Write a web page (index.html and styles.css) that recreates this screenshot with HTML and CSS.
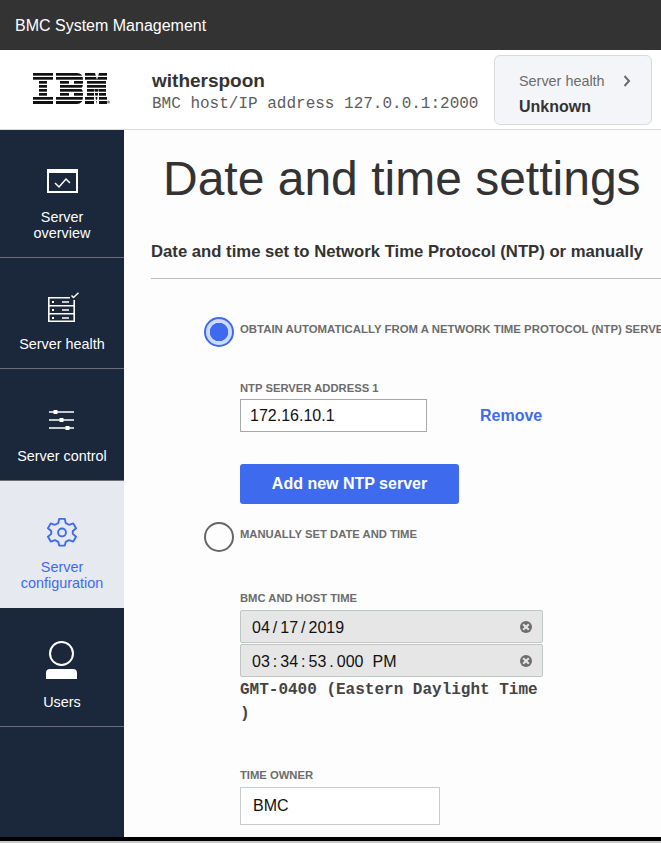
FILE: index.html
```html
<!DOCTYPE html>
<html lang="en">
<head>
<meta charset="utf-8">
<title>BMC System Management</title>
<link rel="stylesheet" href="styles.css">
</head>
<body>
<div class="app">
  <header class="topbar">BMC System Management</header>
  <section class="sysbar">
    <div class="logo">
      <svg width="77" height="31" viewBox="0 0 77 31">
        <g fill="#111">
          <path d="M0 0H20V8H14V23H20V31H0V23H6V8H0Z"/>
          <path fill-rule="evenodd" d="M23 0H44Q50 0 50 7V11Q50 14 48 15.500Q50 17 50 20V24Q50 31 44 31H23V23H27V8H23ZM36 8V12H41V8ZM36 19V23H41V19Z"/>
          <path d="M52 0H62L64 7L66 0H74V8H73V23H74V31H66V14L63.500 31L61 14V31H52V23H54V8H52Z"/>
        </g>
        <g fill="#fff">
          <rect x="0" y="2.700" width="77" height="1.300"/>
          <rect x="0" y="6.700" width="77" height="1.300"/>
          <rect x="0" y="10.700" width="77" height="1.300"/>
          <rect x="0" y="14.700" width="77" height="1.300"/>
          <rect x="0" y="18.700" width="77" height="1.300"/>
          <rect x="0" y="22.700" width="77" height="1.300"/>
          <rect x="0" y="26.700" width="77" height="1.300"/>
        </g>
        <circle cx="75.500" cy="29" r="1.500" fill="#888"/>
      </svg>
    </div>
    <div class="sysinfo">
      <div class="sysname">witherspoon</div>
      <div class="sysaddr">BMC host/IP address 127.0.0.1:2000</div>
    </div>
    <a class="healthcard">
      <span class="healthtop">Server health
        <svg class="chev" width="8" height="12" viewBox="0 0 8 12"><path d="M1.500 1L6 6L1.500 11" fill="none" stroke="#6b6b6b" stroke-width="2"/></svg>
      </span>
      <strong class="healthval">Unknown</strong>
    </a>
  </section>
  <div class="body">
    <nav class="side">
      <a class="navitem ni-overview">
        <svg width="31" height="24" viewBox="0 0 31 24"><rect x="1" y="1" width="29" height="22" fill="none" stroke="#fff" stroke-width="2"/><path d="M0 3H31" stroke="#fff" stroke-width="2"/><path d="M8 14L12 18L19 10L23 14" fill="none" stroke="#fff" stroke-width="1.500"/></svg>
        <span>Server<br>overview</span>
      </a>
      <a class="navitem ni-health">
        <svg width="34" height="30" viewBox="0 0 34 30"><path d="M25 5.800H3.800V29.200H29.200V8M3.800 13.800H29.200M3.800 21.800H29.200" fill="none" stroke="#fff" stroke-width="1.600"/><path d="M17 10H24M17 18H24M17 26H24" stroke="#fff" stroke-width="1.600"/><g fill="#fff"><rect x="7" y="9" width="2" height="2"/><rect x="7" y="17" width="2" height="2"/><rect x="7" y="25" width="2" height="2"/></g><path d="M26.500 3.500L28.500 5.500L33.500 0.800" fill="none" stroke="#fff" stroke-width="1.500"/></svg>
        <span>Server health</span>
      </a>
      <a class="navitem ni-control">
        <svg width="26" height="22" viewBox="0 0 26 22"><path d="M0 3H25M0 11H25M0 19H25" stroke="#fff" stroke-width="1.400"/><rect x="4.500" y="1" width="4" height="4" fill="#fff"/><rect x="10.500" y="9" width="4" height="4" fill="#fff"/><rect x="16.500" y="17" width="4" height="4" fill="#fff"/></svg>
        <span>Server control</span>
      </a>
      <a class="navitem ni-config active">
        <svg width="30" height="30" viewBox="0 0 32 32"><path d="M13 2H19L20 6.500L23.500 8.300L28 6.800L31 12L27.500 15V18L31 21L28 26.200L23.500 24.700L20 26.500L19 30.500H13L12 26.500L8.500 24.700L4 26.200L1 21L4.500 18V15L1 12L4 6.800L8.500 8.300L12 6.500Z" fill="none" stroke="#3e6bee" stroke-width="2" stroke-linejoin="round"/><circle cx="16" cy="16.500" r="4.200" fill="none" stroke="#3e6bee" stroke-width="2"/></svg>
        <span>Server<br>configuration</span>
      </a>
      <a class="navitem ni-users">
        <svg width="32" height="40" viewBox="0 0 32 40"><circle cx="15.500" cy="13.500" r="11.500" fill="none" stroke="#fff" stroke-width="2"/><path d="M0 39V33Q0 29 4 29H27Q31 29 31 33V39Z" fill="#fff"/></svg>
        <span>Users</span>
      </a>
    </nav>
    <main class="content">
      <h1 class="title">Date and time settings</h1>
      <h2 class="subtitle">Date and time set to Network Time Protocol (NTP) or manually</h2>
      <div class="rule"></div>
      <div class="radiorow rr-ntp">
        <span class="radio on"></span>
        <span class="caps">OBTAIN AUTOMATICALLY FROM A NETWORK TIME PROTOCOL (NTP) SERVER</span>
      </div>
      <div class="field f-ntp">
        <label class="caps">NTP SERVER ADDRESS 1</label>
        <div class="ntprow">
          <div class="input ntpinput">172.16.10.1</div>
          <a class="remove">Remove</a>
        </div>
      </div>
      <button class="addbtn">Add new NTP server</button>
      <div class="radiorow rr-man">
        <span class="radio"></span>
        <span class="caps">MANUALLY SET DATE AND TIME</span>
      </div>
      <div class="field f-time">
        <label class="caps">BMC AND HOST TIME</label>
        <div class="dtinput"><span class="dtval">04<i>/</i>17<i>/</i>2019</span><span class="clear"></span></div>
        <div class="dtinput"><span class="dtval">03<i>:</i>34<i>:</i>53<i>.</i>000<b class="ampm">PM</b></span><span class="clear"></span></div>
        <div class="tz">GMT-0400 (Eastern Daylight Time<br>)</div>
      </div>
      <div class="field f-owner">
        <label class="caps">TIME OWNER</label>
        <div class="input ownerinput">BMC</div>
      </div>
    </main>
  </div>
  <div class="bottom"></div>
</div>
</body>
</html>
```
FILE: styles.css
```css
* { box-sizing: border-box; }
html, body { margin: 0; padding: 0; height: 100%; overflow: hidden; }
body { font-family: "Liberation Sans", Arial, sans-serif; color: #333; background: #fff; }
.app { width: 661px; height: 843px; display: flex; flex-direction: column; overflow: hidden; }

.topbar { height: 50px; flex: none; background: #333; color: #fff; font-size: 16px; line-height: 48px; padding: 2px 0 0 15px; }

.sysbar { height: 80px; flex: none; display: flex; background: #fff; border-bottom: 1px solid #d8dade; }
.logo { width: 152px; flex: none; padding: 23px 0 0 33px; }
.logo svg { display: block; }
.sysinfo { width: 342px; flex: none; }
.sysname { font-size: 19px; font-weight: 700; line-height: 21px; margin-top: 20px; color: #333; }
.sysaddr { font-family: "Liberation Mono", "Courier New", monospace; font-size: 16px; line-height: 16px; margin-top: 5px; color: #5d5d5d; white-space: nowrap; }
.healthcard { width: 158px; height: 70px; flex: none; margin-top: 5px; background: #f4f5f9; border: 1px solid #d8dade; border-radius: 6px; padding: 16px 0 0 24px; display: flex; flex-direction: column; }
.healthtop { font-size: 14.400px; line-height: 18px; color: #6b6b6b; display: flex; align-items: center; gap: 18px; }
.healthval { font-size: 16px; line-height: 18px; color: #333; margin-top: 8px; }

.body { flex: 1; min-height: 0; display: flex; }
.side { width: 124px; flex: none; background: #1b273a; display: flex; flex-direction: column; }
.navitem { display: flex; flex-direction: column; align-items: center; color: #fff; font-size: 14.400px; line-height: 16px; text-align: center; border-bottom: 1px solid #6a6e75; }
.navitem svg { display: block; flex: none; }
.ni-overview { height: 128px; padding-top: 39px; }
.ni-overview span { margin-top: 16px; }
.ni-health { height: 111px; padding-top: 34px; }
.ni-health span { margin-top: 14px; }
.ni-control { height: 112px; padding-top: 40px; }
.ni-control span { margin-top: 17px; }
.ni-config { height: 127px; padding-top: 36px; background: #e6e9ef; color: #3e6bee; border-bottom: 1px solid #e6e9ef; }
.ni-config span { margin-top: 12px; }
.ni-users { height: 119px; padding-top: 32px; }
.ni-users span { margin-top: 14px; }

.content { flex: 1; min-width: 0; background: #fdfdfd; padding-left: 27px; overflow: hidden; }
.title { font-size: 48px; font-weight: 400; line-height: 56px; margin: 21px 0 0 12px; color: #333; white-space: nowrap; }
.subtitle { font-size: 16.700px; font-weight: 700; line-height: 20px; margin: 35px 0 0; color: #333; white-space: nowrap; }
.rule { height: 1px; background: #b9bdc0; margin-top: 16px; }

.caps { font-size: 11.250px; font-weight: 700; color: #6c6c6c; line-height: 14px; white-space: nowrap; }
.radiorow { display: flex; align-items: flex-start; margin-left: 53px; gap: 6px; }
.rr-ntp { margin-top: 38px; }
.rr-man { margin-top: 18px; }
.rr-ntp .caps { padding-top: 5px; font-size: 11.400px; }
.rr-man .caps { padding-top: 5px; }
.radio { width: 30px; height: 30px; flex: none; border-radius: 50%; border: 2px solid #666; background: #fdfdfd; }
.radio.on { border-color: #3e6bee; background: radial-gradient(circle, #3e6bee 0 9px, #cfdafb 9.500px); }

.field { margin-left: 89px; }
.field label { display: block; }
.f-ntp { margin-top: 34px; }
.ntprow { display: flex; align-items: center; margin-top: 4px; }
.input { border: 1px solid #a8a8a8; background: #fff; color: #111; font-size: 16px; padding-left: 9px; }
.ntpinput { width: 187px; height: 33px; line-height: 31px; }
.remove { margin-left: 53px; color: #3e6bee; font-size: 16px; font-weight: 700; }
.addbtn { display: block; margin: 32px 0 0 89px; width: 219px; height: 40px; background: #3e6bee; color: #fff; border: 0; border-radius: 3px; font-family: inherit; font-size: 16px; font-weight: 700; padding: 0; }
.f-time { margin-top: 39px; }
.f-time label { margin-bottom: 5px; }
.dtinput { width: 303px; height: 33px; margin-bottom: 1px; background: #e6e6e6; border: 1px solid #bfc6c6; border-radius: 2px; display: flex; align-items: center; justify-content: space-between; padding: 2px 10px 0 11px; font-size: 16px; color: #111; }
.dtval i { font-style: normal; margin: 0 3px; }
.ampm { font-weight: 400; margin-left: 9px; }
.clear { width: 12px; height: 12px; border-radius: 50%; background: #6e6e6e; position: relative; margin-top: -2px; }
.clear::before, .clear::after { content: ""; position: absolute; left: 5px; top: 2px; width: 2px; height: 8px; background: #e6e6e6; }
.clear::before { transform: rotate(45deg); }
.clear::after { transform: rotate(-45deg); }
.tz { font-family: "Liberation Mono", "Courier New", monospace; font-size: 16px; font-weight: 700; color: #444; line-height: 24px; margin-top: 0; white-space: nowrap; }
.f-owner { margin-top: 42px; }
.f-owner label { margin-bottom: 5px; }
.ownerinput { width: 200px; height: 38px; line-height: 36px; border-color: #c8ccce; padding-left: 12px; }

.bottom { height: 6px; flex: none; background: linear-gradient(#000 0 4px, #c8c8c8 4px); }
```
